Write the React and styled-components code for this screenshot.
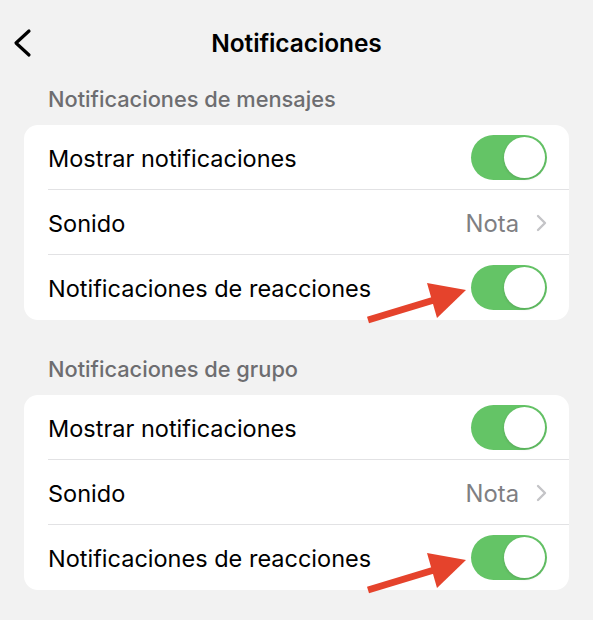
import React from 'react'
import styled, { createGlobalStyle } from 'styled-components'

const sections = [
  {
    title: 'Notificaciones de mensajes',
    rows: [
      { label: 'Mostrar notificaciones', toggle: true },
      { label: 'Sonido', value: 'Nota' },
      { label: 'Notificaciones de reacciones', toggle: true },
    ],
  },
  {
    title: 'Notificaciones de grupo',
    rows: [
      { label: 'Mostrar notificaciones', toggle: true },
      { label: 'Sonido', value: 'Nota' },
      { label: 'Notificaciones de reacciones', toggle: true },
    ],
  },
]

const App = () => {
  return (
    <>
      <GlobalStyle />
      <Page>
        <NavBar>
          <BackButton aria-label="Atrás">
            <svg width="22" height="30" viewBox="0 0 22 30">
              <polyline
                points="17,3 4,15 17,27"
                fill="none"
                stroke="#000"
                strokeWidth="3.2"
                strokeLinecap="round"
                strokeLinejoin="round"
              />
            </svg>
          </BackButton>
          <Title>Notificaciones</Title>
        </NavBar>

        {sections.map((section, i) => (
          <Section key={section.title} $first={i === 0}>
            <SectionTitle>{section.title}</SectionTitle>
            <Card>
              {section.rows.map((row, j) => (
                <Row key={row.label} $last={j === section.rows.length - 1}>
                  <Label>{row.label}</Label>
                  {row.toggle ? (
                    <Toggle>
                      <Knob />
                    </Toggle>
                  ) : (
                    <Detail>
                      <span>{row.value}</span>
                      <svg width="11" height="18" viewBox="0 0 11 18">
                        <polyline
                          points="2,2 9,9 2,16"
                          fill="none"
                          stroke="#c4c4c7"
                          strokeWidth="2.4"
                          strokeLinecap="round"
                          strokeLinejoin="round"
                        />
                      </svg>
                    </Detail>
                  )}
                </Row>
              ))}
              <Arrow viewBox="0 0 106 45" width="106" height="45">
                <line x1="4" y1="40" x2="70" y2="20" stroke="#e5432c" strokeWidth="7" />
                <polygon points="102,10 63,3 73,38" fill="#e5432c" />
              </Arrow>
            </Card>
          </Section>
        ))}
      </Page>
    </>
  )
}

const GlobalStyle = createGlobalStyle`
  html, body {
    margin: 0;
    padding: 0;
    background: #f2f2f2;
  }
  body {
    font-family: Inter, "Noto Sans", "Liberation Sans", sans-serif;
    -webkit-font-smoothing: antialiased;
  }
`

const Page = styled.div`
  width: 593px;
  min-height: 620px;
  background: #f2f2f2;
  padding: 0 24px;
  box-sizing: border-box;
`

const NavBar = styled.div`
  position: relative;
  height: 86px;
  display: flex;
  align-items: center;
  justify-content: center;
`

const BackButton = styled.div`
  position: absolute;
  left: -12px;
  top: 28px;
  display: flex;
`

const Title = styled.h1`
  margin: 0;
  font-size: 24.5px;
  font-weight: 600;
  color: #000;
  letter-spacing: -0.1px;
`

const Section = styled.section`
  margin-top: ${p => (p.$first ? '0' : '36px')};
`

const SectionTitle = styled.h2`
  margin: 0 0 13px 24px;
  height: 26px;
  line-height: 26px;
  font-size: 21.8px;
  font-weight: 500;
  color: #6d6d70;
`

const Card = styled.div`
  position: relative;
  background: #fff;
  border-radius: 14px;
`

const Row = styled.div`
  height: 65px;
  margin-left: 24px;
  padding-right: 22px;
  display: flex;
  align-items: center;
  justify-content: space-between;
  border-bottom: ${p => (p.$last ? 'none' : '1px solid #e2e2e4')};
  box-sizing: border-box;
`

const Label = styled.span`
  font-size: 23.5px;
  color: #000;
  padding-top: 2px;
`

const Toggle = styled.div`
  width: 76px;
  height: 45px;
  border-radius: 23px;
  background: #64c466;
  display: flex;
  align-items: center;
  justify-content: flex-end;
  padding: 0 2px;
  box-sizing: border-box;
`

const Knob = styled.div`
  width: 41px;
  height: 41px;
  border-radius: 50%;
  background: #fff;
  box-shadow: 0 1px 3px rgba(0, 0, 0, 0.15);
`

const Detail = styled.div`
  display: flex;
  align-items: center;
  gap: 17px;
  font-size: 23.8px;
  color: #7f7f83;
  padding-top: 2px;
`

const Arrow = styled.svg`
  position: absolute;
  left: 340px;
  top: 155px;
  pointer-events: none;
`

export default App
